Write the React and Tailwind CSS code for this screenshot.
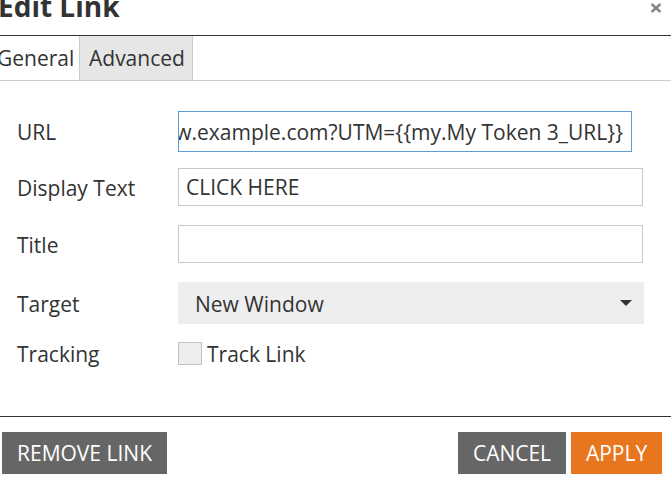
import React from "react";

const font = { fontFamily: '"Open Sans", "Liberation Sans", sans-serif' };

const Row = ({ label, className, children }) => (
  <div className={`flex items-center ${className}`}>
    <div className="w-[190px] shrink-0 pl-[29px] pt-[3px] text-[21px] text-[#333]">{label}</div>
    {children}
  </div>
);

export default function App() {
  return (
    <div className="w-[671px] h-[477px] overflow-hidden bg-white" style={font}>
      <div className="-ml-[12px] w-[683px]">
        {/* header */}
        <div className="flex justify-between h-[36px] border-b border-[#333] pl-[10px] pr-[9px]">
          <h1 className="text-[28px] font-bold leading-none text-[#333] -mt-[8px]">Edit Link</h1>
          <svg width="12" height="10" viewBox="0 0 12 10" className="mt-[3px]">
            <path d="M1.5 1 L10.5 9 M10.5 1 L1.5 9" stroke="#888" strokeWidth="2.6" />
          </svg>
        </div>

        {/* tabs */}
        <div className="flex h-[45px] border-b border-[#ccc]">
          <div className="w-[91px] pl-[9px] pt-[1px] flex items-center text-[21px] text-[#333] bg-white">General</div>
          <div className="w-[114px] pl-[9px] pt-[1px] flex items-center text-[21px] text-[#333] bg-[#e6e6e6] border-x border-[#ccc]">
            Advanced
          </div>
        </div>

        {/* form */}
        <div className="pt-[30px] pb-[51px]">
          <Row label="URL" className="h-[41px]">
            <div className="w-[454px] h-full border border-[#5b9dd9] flex items-center justify-end overflow-hidden whitespace-nowrap pr-[8px] pt-[2px] text-[21px] text-[#333]">
              http://www.example.com?UTM={"{{"}my.My Token 3_URL{"}}"}
            </div>
          </Row>
          <Row label="Display Text" className="h-[38px] mt-[16px]">
            <div className="w-[465px] h-full border border-[#c8c8c8] flex items-center pl-[7px] pt-[2px] text-[21px] text-[#333]">
              CLICK HERE
            </div>
          </Row>
          <Row label="Title" className="h-[38px] mt-[19px]">
            <div className="w-[465px] h-full border border-[#c8c8c8]" />
          </Row>
          <Row label="Target" className="h-[42px] mt-[19px]">
            <div className="w-[466px] h-full bg-[#eeeeee] flex items-center justify-between pl-[17px] pr-[12px] text-[21px] text-[#333]">
              <span className="pt-[3px]">New Window</span>
              <svg width="12" height="6" viewBox="0 0 12 6">
                <path d="M0 0 H12 L6 6 Z" fill="#333" />
              </svg>
            </div>
          </Row>
          <Row label="Tracking" className="h-[23px] mt-[18px]">
            <div className="flex items-center gap-[5px]">
              <div className="w-[24px] h-[23px] bg-[#eeeeee] border border-[#c2c2c2]" />
              <span className="pt-[3px] text-[21px] text-[#333]">Track Link</span>
            </div>
          </Row>
        </div>

        {/* footer */}
        <div className="border-t border-[#333] pt-[15px] pl-[14px] pr-[9px] flex justify-between">
          <button className="w-[165px] h-[42px] flex items-center justify-center bg-[#666] text-white text-[21px] leading-none">REMOVE LINK</button>
          <div className="flex gap-[5px]">
            <button className="w-[108px] h-[42px] flex items-center justify-center bg-[#666] text-white text-[21px] leading-none">CANCEL</button>
            <button className="w-[91px] h-[42px] flex items-center justify-center bg-[#e8761e] text-white text-[21px] leading-none">APPLY</button>
          </div>
        </div>
      </div>
    </div>
  );
}
